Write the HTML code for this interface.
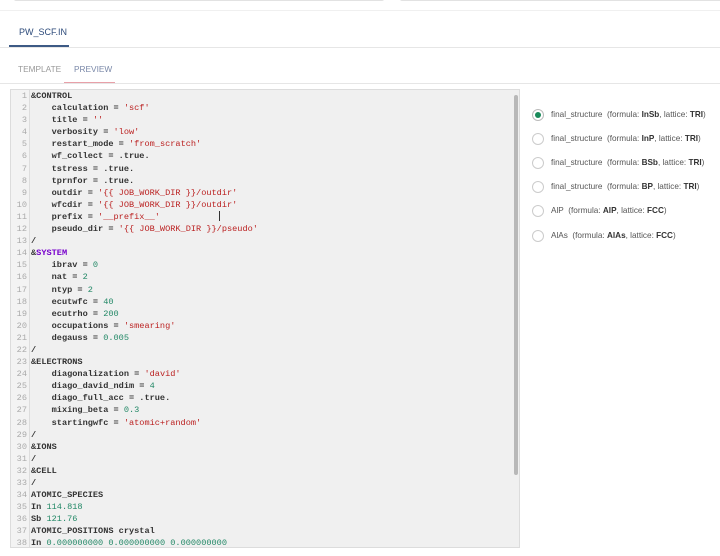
<!DOCTYPE html>
<html><head><meta charset="utf-8"><style>
*{margin:0;padding:0;box-sizing:border-box}
body{width:720px;height:556px;background:#fff;position:relative;overflow:hidden;font-family:"Liberation Sans",sans-serif}
.abs{position:absolute}
.ed{position:absolute;left:10px;top:89px;width:510px;height:459px;background:#f0f0f0;border:1px solid #dcdcdc;overflow:hidden}
.gut{position:absolute;left:0;top:0;width:19px;height:100%;background:#f3f3f3;border-right:1px solid #ddd}
.code{position:absolute;left:0;top:0;font-family:"Liberation Mono",monospace;font-size:8.6px;line-height:12.1px;color:#333;white-space:pre;font-weight:bold}
.ln{display:inline-block;width:16px;text-align:right;color:#aaa;font-weight:normal;margin-right:4px}
.s{color:#b22;font-weight:normal}.n{color:#286;font-weight:normal}.k{color:#70c}
.r{position:absolute;left:532px;width:12px;height:12px;border:1px solid #ccc;border-radius:50%}
.lbl{position:absolute;left:551px;font-size:8.2px;color:#555}
.lbl b{color:#333}
</style></head><body>
<div class="abs" style="left:14px;top:-10px;width:370px;height:11px;border:1px solid #e2e2e2;border-radius:2px"></div>
<div class="abs" style="left:400px;top:-10px;width:330px;height:11px;border:1px solid #e2e2e2;border-radius:2px"></div>
<div class="abs" style="left:0;top:10px;width:720px;height:1px;background:#f0f0f0"></div>
<div class="abs" style="left:19px;top:27px;font-size:9px;color:#2c4a7a">PW_SCF.IN</div>
<div class="abs" style="left:0;top:47px;width:720px;height:1px;background:#e6e6e6"></div>
<div class="abs" style="left:9px;top:45px;width:60px;height:2px;background:#3d5a85"></div>
<div class="abs" style="left:18px;top:64px;font-size:8.3px;color:#999">TEMPLATE</div>
<div class="abs" style="left:74px;top:64px;font-size:8.3px;color:#7a88a8">PREVIEW</div>
<div class="abs" style="left:0;top:83px;width:720px;height:1px;background:#e6e6e6"></div>
<div class="abs" style="left:64px;top:82px;width:51px;height:1px;background:#e8a0a8"></div>
<div class="ed"><div class="gut"></div>
<div class="code"><span class="ln">1</span>&amp;CONTROL
<span class="ln">2</span>    calculation = <span class="s">'scf'</span>
<span class="ln">3</span>    title = <span class="s">''</span>
<span class="ln">4</span>    verbosity = <span class="s">'low'</span>
<span class="ln">5</span>    restart_mode = <span class="s">'from_scratch'</span>
<span class="ln">6</span>    wf_collect = .true.
<span class="ln">7</span>    tstress = .true.
<span class="ln">8</span>    tprnfor = .true.
<span class="ln">9</span>    outdir = <span class="s">'{{ JOB_WORK_DIR }}/outdir'</span>
<span class="ln">10</span>    wfcdir = <span class="s">'{{ JOB_WORK_DIR }}/outdir'</span>
<span class="ln">11</span>    prefix = <span class="s">'__prefix__'</span>
<span class="ln">12</span>    pseudo_dir = <span class="s">'{{ JOB_WORK_DIR }}/pseudo'</span>
<span class="ln">13</span>/
<span class="ln">14</span>&amp;<span class="k">SYSTEM</span>
<span class="ln">15</span>    ibrav = <span class="n">0</span>
<span class="ln">16</span>    nat = <span class="n">2</span>
<span class="ln">17</span>    ntyp = <span class="n">2</span>
<span class="ln">18</span>    ecutwfc = <span class="n">40</span>
<span class="ln">19</span>    ecutrho = <span class="n">200</span>
<span class="ln">20</span>    occupations = <span class="s">'smearing'</span>
<span class="ln">21</span>    degauss = <span class="n">0.005</span>
<span class="ln">22</span>/
<span class="ln">23</span>&amp;ELECTRONS
<span class="ln">24</span>    diagonalization = <span class="s">'david'</span>
<span class="ln">25</span>    diago_david_ndim = <span class="n">4</span>
<span class="ln">26</span>    diago_full_acc = .true.
<span class="ln">27</span>    mixing_beta = <span class="n">0.3</span>
<span class="ln">28</span>    startingwfc = <span class="s">'atomic+random'</span>
<span class="ln">29</span>/
<span class="ln">30</span>&amp;IONS
<span class="ln">31</span>/
<span class="ln">32</span>&amp;CELL
<span class="ln">33</span>/
<span class="ln">34</span>ATOMIC_SPECIES
<span class="ln">35</span>In <span class="n">114.818</span>
<span class="ln">36</span>Sb <span class="n">121.76</span>
<span class="ln">37</span>ATOMIC_POSITIONS crystal
<span class="ln">38</span>In <span class="n">0.000000000 0.000000000 0.000000000</span></div>
<div class="abs" style="left:503px;top:5px;width:4px;height:380px;background:#b8b8b8;border-radius:2px"></div>
</div>
<div class="abs" style="left:219px;top:211px;width:1px;height:10px;background:#333"></div>
<div class="r" style="top:109px;border-color:#bbb"><div style="position:absolute;left:2px;top:2px;width:6px;height:6px;border-radius:50%;background:#1a8a5a"></div></div>
<div class="lbl" style="top:110px">final_structure&nbsp; (formula: <b>InSb</b>, lattice: <b>TRI</b>)</div>
<div class="r" style="top:133px"></div>
<div class="lbl" style="top:134px">final_structure&nbsp; (formula: <b>InP</b>, lattice: <b>TRI</b>)</div>
<div class="r" style="top:157px"></div>
<div class="lbl" style="top:158px">final_structure&nbsp; (formula: <b>BSb</b>, lattice: <b>TRI</b>)</div>
<div class="r" style="top:181px"></div>
<div class="lbl" style="top:182px">final_structure&nbsp; (formula: <b>BP</b>, lattice: <b>TRI</b>)</div>
<div class="r" style="top:205px"></div>
<div class="lbl" style="top:206px">AlP&nbsp; (formula: <b>AlP</b>, lattice: <b>FCC</b>)</div>
<div class="r" style="top:230px"></div>
<div class="lbl" style="top:231px">AlAs&nbsp; (formula: <b>AlAs</b>, lattice: <b>FCC</b>)</div>
</body></html>
